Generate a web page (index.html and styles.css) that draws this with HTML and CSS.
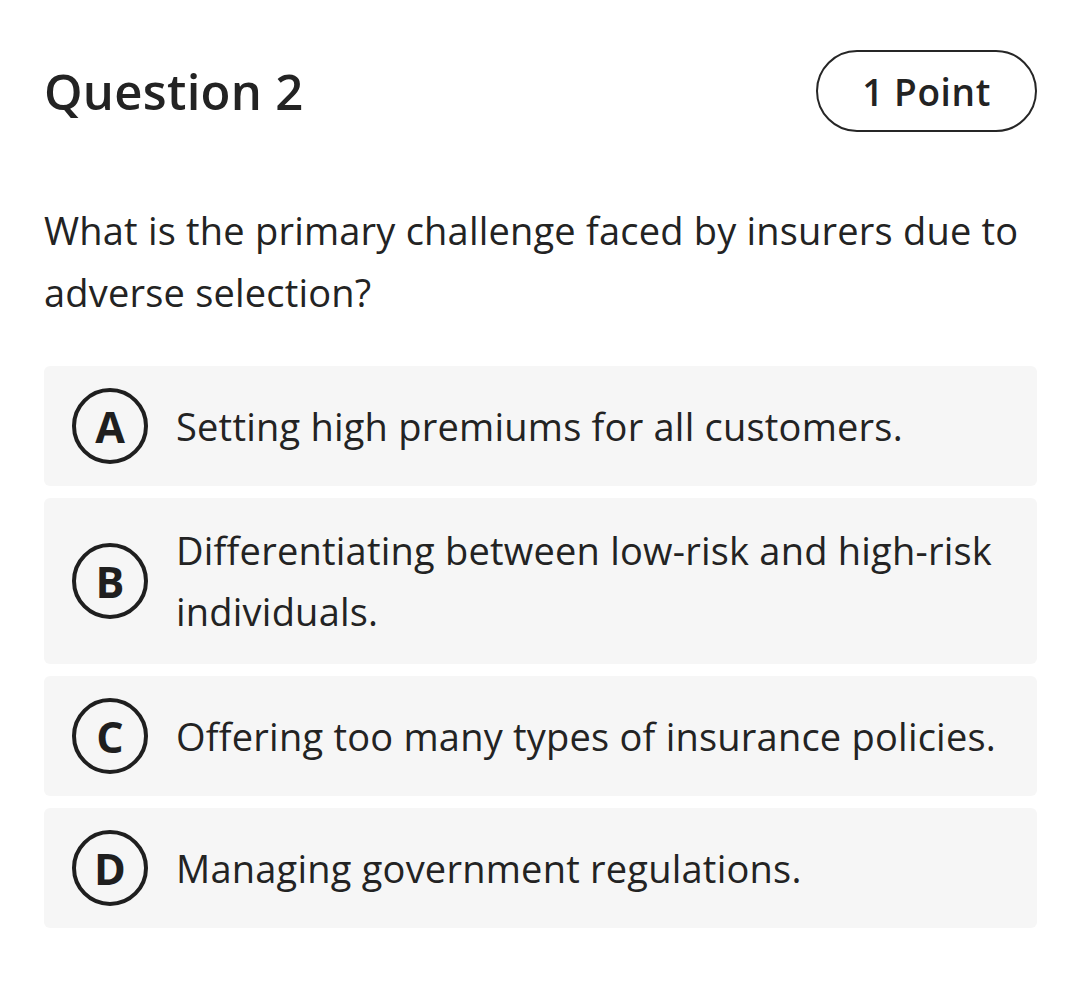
FILE: index.html
```html
<!DOCTYPE html>
<html lang="en">
<head>
<meta charset="utf-8">
<title>Question 2</title>
<link rel="stylesheet" href="styles.css">
</head>
<body>
<main class="quiz">
  <header class="quiz-head">
    <h1 class="quiz-title">Question 2</h1>
    <span class="points">1 Point</span>
  </header>
  <p class="prompt">What is the primary challenge faced by insurers due to adverse selection?</p>
  <ul class="options">
    <li class="option"><span class="badge">A</span><span class="option-text">Setting high premiums for all customers.</span></li>
    <li class="option"><span class="badge">B</span><span class="option-text">Differentiating between low-risk and high-risk individuals.</span></li>
    <li class="option"><span class="badge">C</span><span class="option-text">Offering too many types of insurance policies.</span></li>
    <li class="option"><span class="badge">D</span><span class="option-text">Managing government regulations.</span></li>
  </ul>
</main>
</body>
</html>
```
FILE: styles.css
```css
* { box-sizing: border-box; }
html, body { margin: 0; padding: 0; background: #ffffff; }
body {
  font-family: "Open Sans", "Liberation Sans", sans-serif;
  color: #232323;
}
.quiz {
  width: 993px;
  margin-left: 44px;
  padding-top: 50px;
}
.quiz-head {
  display: flex;
  align-items: center;
  justify-content: space-between;
  height: 82px;
}
.quiz-title {
  margin: 0;
  font-size: 49px;
  font-weight: 600;
  line-height: 1;
  letter-spacing: 0.3px;
}
.points {
  display: flex;
  align-items: center;
  justify-content: center;
  width: 221px;
  height: 82px;
  border: 2px solid #262626;
  border-radius: 41px;
  font-size: 37px;
  font-weight: 600;
  letter-spacing: 0.6px;
  color: #232323;
}
.prompt {
  margin: 67px 0 0;
  font-size: 38px;
  line-height: 62px;
  letter-spacing: 0.2px;
}
.options {
  list-style: none;
  margin: 43px 0 0;
  padding: 0;
  display: flex;
  flex-direction: column;
  gap: 12px;
}
.option {
  display: flex;
  align-items: center;
  gap: 28px;
  padding: 22px 30px 22px 28px;
  background: #f6f6f6;
  border-radius: 6px;
}
.badge {
  flex: none;
  display: flex;
  align-items: center;
  justify-content: center;
  width: 76px;
  height: 76px;
  border: 4px solid #1f1f1f;
  border-radius: 50%;
  font-size: 43px;
  font-weight: 700;
  color: #1f1f1f;
  line-height: 1;
}
.option-text {
  font-size: 38px;
  line-height: 61px;
  letter-spacing: 0.22px;
  color: #232323;
}
```
